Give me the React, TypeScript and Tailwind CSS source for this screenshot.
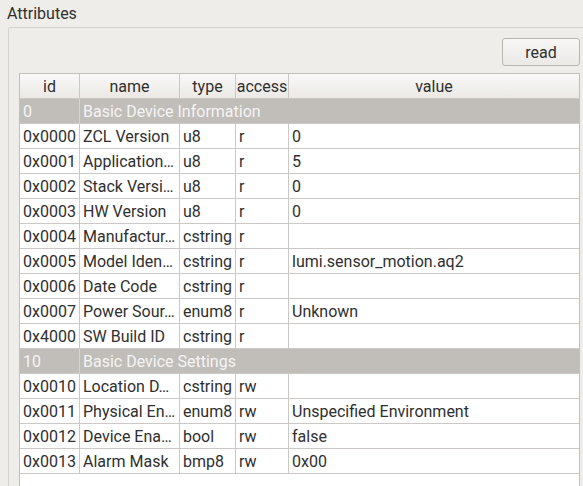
import React from "react";

type Attr = { id: string; name: string; type: string; access: string; value: string };
type Group = { id: string; title: string; attrs: Attr[] };

const groups: Group[] = [
  {
    id: "0",
    title: "Basic Device Information",
    attrs: [
      { id: "0x0000", name: "ZCL Version", type: "u8", access: "r", value: "0" },
      { id: "0x0001", name: "Application…", type: "u8", access: "r", value: "5" },
      { id: "0x0002", name: "Stack Versi…", type: "u8", access: "r", value: "0" },
      { id: "0x0003", name: "HW Version", type: "u8", access: "r", value: "0" },
      { id: "0x0004", name: "Manufactur…", type: "cstring", access: "r", value: "" },
      { id: "0x0005", name: "Model Iden…", type: "cstring", access: "r", value: "lumi.sensor_motion.aq2" },
      { id: "0x0006", name: "Date Code", type: "cstring", access: "r", value: "" },
      { id: "0x0007", name: "Power Sour…", type: "enum8", access: "r", value: "Unknown" },
      { id: "0x4000", name: "SW Build ID", type: "cstring", access: "r", value: "" },
    ],
  },
  {
    id: "10",
    title: "Basic Device Settings",
    attrs: [
      { id: "0x0010", name: "Location D…", type: "cstring", access: "rw", value: "" },
      { id: "0x0011", name: "Physical En…", type: "enum8", access: "rw", value: "Unspecified Environment" },
      { id: "0x0012", name: "Device Ena…", type: "bool", access: "rw", value: "false" },
      { id: "0x0013", name: "Alarm Mask", type: "bmp8", access: "rw", value: "0x00" },
    ],
  },
];

const cell = "flex h-[25px] items-center overflow-hidden whitespace-nowrap border-b border-[#cbc8c5] pl-[3px] pt-[1px]";

export default function App() {
  return (
    <div
      className="h-[486px] w-[583px] overflow-hidden bg-[#efedea] text-[16px] leading-[19px] text-[#2f2f2f]"
      style={{ fontFamily: "Roboto, 'Liberation Sans', sans-serif" }}
    >
      <div className="pl-[7px] pt-[4px] h-[27px]">Attributes</div>

      <div className="ml-[8px] h-[600px] w-[620px] rounded-[2px] border border-[#d7d3cf] pl-[10px] pt-[10px]">
        <div className="flex w-[561px] justify-end">
          <button
            type="button"
            className="h-[28px] w-[78px] rounded-[3px] border border-[#b9b5b1] bg-gradient-to-b from-[#f8f7f6] to-[#ebe9e6] pt-[1px] text-[16px] leading-[19px] text-[#2f2f2f]"
          >
            read
          </button>
        </div>

        <div className="mt-[7px] h-[500px] w-[561px] border-x border-t border-[#c3bfbb] bg-white">
          <div className="grid grid-cols-[60px_100px_56px_53px_290px]">
            {["id", "name", "type", "access", "value"].map((h, i) => (
              <div
                key={h}
                className={`flex h-[25px] items-center justify-center border-b border-[#cbc8c5] bg-gradient-to-b from-[#faf9f8] to-[#ebe8e5] pt-[1px] ${
                  i < 4 ? "border-r" : ""
                }`}
              >
                {h}
              </div>
            ))}

            {groups.map((g) => (
              <React.Fragment key={g.id}>
                <div className={`${cell} border-r border-r-[#d6d3d0] bg-[#c1bdb9] text-[#f4f4f4]`}>{g.id}</div>
                <div className={`${cell} col-span-4 bg-[#c1bdb9] text-[#f4f4f4]`}>{g.title}</div>
                {g.attrs.map((a) => (
                  <React.Fragment key={a.id}>
                    <div className={`${cell} border-r`}>{a.id}</div>
                    <div className={`${cell} border-r`}>{a.name}</div>
                    <div className={`${cell} border-r`}>{a.type}</div>
                    <div className={`${cell} border-r`}>{a.access}</div>
                    <div className={cell}>{a.value}</div>
                  </React.Fragment>
                ))}
              </React.Fragment>
            ))}
          </div>
        </div>
      </div>
    </div>
  );
}
